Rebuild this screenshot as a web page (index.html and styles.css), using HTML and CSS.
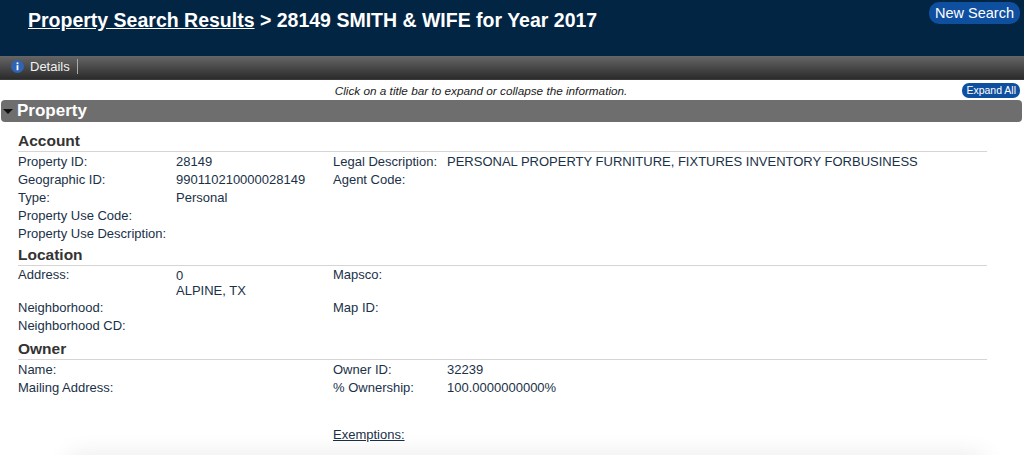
FILE: index.html
```html
<!DOCTYPE html>
<html lang="en">
<head>
  <meta charset="UTF-8" />
  <meta name="viewport" content="width=device-width, initial-scale=1.0" />
  <title>Property Search Results</title>
  <link rel="stylesheet" href="styles.css">
</head>
<body>
  <div class="header">
    <h1><a href="#">Property Search Results</a> &gt; 28149 SMITH &amp; WIFE for Year 2017</h1>
    <a class="new-search" href="#">New Search</a>
  </div>

  <div class="tabs">
    <svg class="info-icon" width="13" height="13" viewBox="0 0 13 13">
      <circle cx="6.5" cy="6.5" r="6.5" fill="#2f64b4" />
      <rect x="5.6" y="2.4" width="1.8" height="1.8" fill="#fff" />
      <rect x="5.6" y="5.2" width="1.8" height="5" fill="#fff" />
    </svg>
    <span class="tab">Details</span>
  </div>

  <div class="hint-row">
    <em>Click on a title bar to expand or collapse the information.</em>
    <a class="expand-all" href="#">Expand All</a>
  </div>

  <div class="title-bar">
    <span class="arrow"></span>
    <h2>Property</h2>
  </div>

  <div class="content">
    <h3>Account</h3>
    <div class="rows">
      <div>Property ID:</div><div>28149</div><div>Legal Description:</div><div>PERSONAL PROPERTY FURNITURE, FIXTURES INVENTORY FORBUSINESS</div>
      <div>Geographic ID:</div><div>990110210000028149</div><div>Agent Code:</div><div></div>
      <div>Type:</div><div>Personal</div><div></div><div></div>
      <div>Property Use Code:</div><div></div><div></div><div></div>
      <div>Property Use Description:</div><div></div><div></div><div></div>
    </div>

    <h3>Location</h3>
    <div class="rows rows-location">
      <div>Address:</div><div class="address">0<br />ALPINE, TX</div><div>Mapsco:</div><div></div>
      <div>Neighborhood:</div><div></div><div>Map ID:</div><div></div>
      <div>Neighborhood CD:</div><div></div><div></div><div></div>
    </div>

    <h3>Owner</h3>
    <div class="rows">
      <div>Name:</div><div></div><div>Owner ID:</div><div>32239</div>
      <div>Mailing Address:</div><div></div><div>% Ownership:</div><div>100.0000000000%</div>
    </div>
    <div class="exemptions">Exemptions:</div>
  </div>
  <div class="page-fade"></div>
</body>
</html>
```

FILE: styles.css
```css
html, body {
  height: 455px;
  overflow: hidden;
}
body {
  margin: 0;
  font-family: 'Liberation Sans', Arial, sans-serif;
  font-size: 13px;
  color: #1a3148;
  background: white;
}
.header {
  height: 56px;
  background: #022544;
  display: flex;
  justify-content: space-between;
  align-items: flex-start;
  padding: 0 4px 0 28px;
  box-sizing: border-box;
}
h1 {
  margin: 8px 0 0;
  font-size: 19.5px;
  line-height: 24px;
  font-weight: bold;
  color: white;
}
h1 a {
  color: white;
}
.new-search {
  margin-top: 2px;
  padding: 0 6px;
  height: 22px;
  line-height: 22px;
  border-radius: 10px;
  background: #0f4fa0;
  color: white;
  font-size: 14.5px;
  text-decoration: none;
}
.tabs {
  height: 24px;
  box-sizing: border-box;
  background: linear-gradient(#666, #2b2b2b);
  border-bottom: 1px solid #3a3a3a;
  display: flex;
  align-items: center;
  padding: 0 0 3px 11px;
}
.info-icon {
  margin-right: 6px;
}
.tab {
  color: #f2f2f2;
  font-size: 13px;
  padding-right: 7px;
  line-height: 15px;
  border-right: 1px solid #aaa;
}
.hint-row {
  height: 20px;
  display: flex;
  align-items: center;
  justify-content: flex-end;
  padding-right: 4px;
  color: #222;
  font-size: 11.75px;
}
.hint-row em {
  margin-right: 335px;
}
.expand-all {
  padding: 0 4px;
  height: 15px;
  line-height: 15px;
  border-radius: 7px;
  background: #0f4fa0;
  color: white;
  font-size: 10.5px;
  text-decoration: none;
}
.title-bar {
  height: 22px;
  margin: 0 2px 0 1px;
  background: #6e6e6e;
  border-radius: 4px;
  display: flex;
  align-items: center;
  padding-left: 2px;
}
.arrow {
  width: 0;
  height: 0;
  border-left: 5px solid transparent;
  border-right: 5px solid transparent;
  border-top: 5px solid #111;
  margin-right: 4px;
}
h2 {
  margin: 0;
  font-size: 17px;
  color: white;
}
.content {
  padding: 6px 37px 0 18px;
}
h3 {
  margin: 0;
  height: 19px;
  padding-top: 4px;
  line-height: 18px;
  font-size: 15.5px;
  color: #333;
  border-bottom: 1px solid #d5d5d5;
}
.rows {
  display: grid;
  grid-template-columns: 158px 157px 114px 1fr;
  grid-auto-rows: minmax(18px, auto);
  line-height: 18px;
  padding-top: 1px;
  margin-bottom: -1px;
}
.rows-location {
  padding-top: 0;
  margin-bottom: 1px;
}
.address {
  line-height: 15px;
  padding-top: 2px;
  height: 31px;
}
.exemptions {
  margin: 30px 0 0 315px;
  text-decoration: underline;
  line-height: 18px;
}
.page-fade {
  position: absolute;
  left: 70px;
  right: 40px;
  top: 458px;
  height: 10px;
  box-shadow: 0 0 24px rgba(0, 0, 0, 0.16);
}
```
